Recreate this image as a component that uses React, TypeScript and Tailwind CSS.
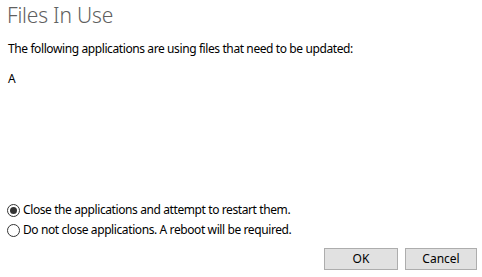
import React from "react";

export default function App() {
  const font = { fontFamily: '"Segoe UI", "Noto Sans", "Open Sans", sans-serif' };
  return (
    <div
      className="w-[482px] h-[277px] bg-white flex flex-col text-black overflow-hidden"
      style={font}
    >
      <div className="pl-[7px] pt-[1px] text-[21px] leading-[28px] font-light text-[#5f5f5f] tracking-[-0.2px]">
        Files In Use
      </div>
      <div className="pl-[8px] mt-[12px] text-[12px] leading-[16px] tracking-[-0.4px]">
        The following applications are using files that need to be updated:
      </div>
      <div className="pl-[8px] mt-[14px] text-[12px] leading-[16px]">A</div>
      <div className="flex-1" />
      <div className="flex flex-col gap-[4px] pl-[7px] text-[12px] leading-[16px] tracking-[-0.4px]">
        <label className="flex items-center gap-[3px]">
          <span className="w-[13px] h-[13px] rounded-full border border-[#333] flex items-center justify-center">
            <span className="w-[7px] h-[7px] rounded-full bg-[#333]" />
          </span>
          <span>Close the applications and attempt to restart them.</span>
        </label>
        <label className="flex items-center gap-[3px]">
          <span className="w-[13px] h-[13px] rounded-full border border-[#333]" />
          <span>Do not close applications. A reboot will be required.</span>
        </label>
      </div>
      <div className="flex justify-end gap-[7px] pr-[5px] mt-[10px] mb-[7px] text-[12px]">
        <button className="w-[74px] h-[22px] bg-[#e1e1e1] border border-[#adadad]">OK</button>
        <button className="w-[72px] h-[22px] bg-[#e1e1e1] border border-[#adadad]">Cancel</button>
      </div>
    </div>
  );
}
